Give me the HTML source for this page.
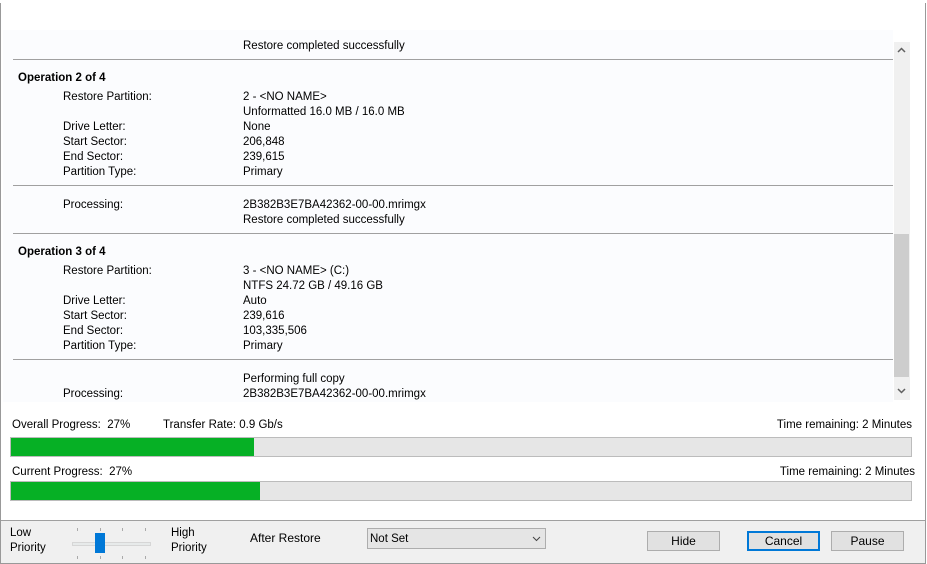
<!DOCTYPE html>
<html><head><style>
*{margin:0;padding:0;box-sizing:border-box}
body{width:927px;height:564px;position:relative;background:#fff;font-family:"Liberation Sans",sans-serif;font-size:11.5px;color:#000;overflow:hidden}
.a{position:absolute;white-space:nowrap;line-height:15px}
.b{font-weight:bold}
.hr{position:absolute;left:13px;width:880px;height:1px;background:#a0a0a0}
.bar{position:absolute;left:10px;width:902px;height:20px;background:#e6e6e6;border:1px solid #bcbcbc}
.bar div{height:100%;background:#06b025}
.btn{position:absolute;top:531px;height:20px;width:73px;background:#e1e1e1;border:1px solid #adadad;text-align:center;line-height:18px;font-size:12px}
.t{position:absolute;width:1px;height:3px;background:#aaa}
</style></head><body>
<div style="position:absolute;left:0;top:3px;width:926px;height:561px;border:1px solid #999;border-top:none;background:#fff"></div>
<div style="position:absolute;left:3px;top:30px;width:890px;height:372px;background:#fbfcfe"></div>
<div class="a" style="left:243px;top:39px">Restore completed successfully</div>
<div class="hr" style="top:59px"></div>
<div class="a b" style="left:18px;top:71px">Operation 2 of 4</div>
<div class="a" style="left:63px;top:90px">Restore Partition:<br><br>Drive Letter:<br>Start Sector:<br>End Sector:<br>Partition Type:</div>
<div class="a" style="left:243px;top:90px">2 - &lt;NO NAME&gt;<br>Unformatted 16.0 MB / 16.0 MB<br>None<br>206,848<br>239,615<br>Primary</div>
<div class="hr" style="top:185px"></div>
<div class="a" style="left:63px;top:198px">Processing:</div>
<div class="a" style="left:243px;top:198px">2B382B3E7BA42362-00-00.mrimgx<br>Restore completed successfully</div>
<div class="hr" style="top:233px"></div>
<div class="a b" style="left:18px;top:245px">Operation 3 of 4</div>
<div class="a" style="left:63px;top:264px">Restore Partition:<br><br>Drive Letter:<br>Start Sector:<br>End Sector:<br>Partition Type:</div>
<div class="a" style="left:243px;top:264px">3 - &lt;NO NAME&gt; (C:)<br>NTFS 24.72 GB / 49.16 GB<br>Auto<br>239,616<br>103,335,506<br>Primary</div>
<div class="hr" style="top:359px"></div>
<div class="a" style="left:243px;top:372px">Performing full copy</div>
<div class="a" style="left:63px;top:387px">Processing:</div>
<div class="a" style="left:243px;top:387px">2B382B3E7BA42362-00-00.mrimgx</div>
<div style="position:absolute;left:894px;top:42px;width:16px;height:358px;background:#f0f0f0"></div>
<div style="position:absolute;left:894px;top:234px;width:15px;height:143px;background:#cdcdcd"></div>
<svg style="position:absolute;left:897px;top:47px" width="9" height="6"><path d="M1 5L4.5 1.5L8 5" stroke="#606060" stroke-width="1.5" fill="none"/></svg>
<svg style="position:absolute;left:897px;top:388px" width="9" height="6"><path d="M1 1L4.5 4.5L8 1" stroke="#606060" stroke-width="1.5" fill="none"/></svg>
<div class="a" style="left:12px;top:418px">Overall Progress:&nbsp; 27%</div>
<div class="a" style="left:163px;top:418px">Transfer Rate: 0.9 Gb/s</div>
<div class="a" style="right:15px;top:418px">Time remaining: 2 Minutes</div>
<div class="bar" style="top:437px"><div style="width:243px"></div></div>
<div class="a" style="left:12px;top:465px">Current Progress:&nbsp; 27%</div>
<div class="a" style="right:12px;top:465px">Time remaining: 2 Minutes</div>
<div class="bar" style="top:481px"><div style="width:249px"></div></div>
<div style="position:absolute;left:1px;top:520px;width:924px;height:43px;background:#f0f0f0;border-top:1px solid #a0a0a0"></div>
<div class="a" style="left:10px;top:526px">Low<br>Priority</div>
<div class="a" style="left:171px;top:526px">High<br>Priority</div>
<div class="t" style="left:77px;top:528px"></div><div class="t" style="left:100px;top:528px"></div><div class="t" style="left:122px;top:528px"></div><div class="t" style="left:145px;top:528px"></div>
<div class="t" style="left:77px;top:556px"></div><div class="t" style="left:100px;top:556px"></div><div class="t" style="left:122px;top:556px"></div><div class="t" style="left:145px;top:556px"></div>
<div style="position:absolute;left:72px;top:542px;width:79px;height:4px;background:#e7eaea;border:1px solid #d6d6d6"></div>
<div style="position:absolute;left:95px;top:533px;width:10px;height:20px;background:#0078d7"></div>
<div class="a" style="left:250px;top:531px;font-size:12px">After Restore</div>
<div style="position:absolute;left:367px;top:528px;width:179px;height:21px;background:#e5e5e5;border:1px solid #adadad"></div>
<div class="a" style="left:370px;top:532px">Not Set</div>
<svg style="position:absolute;left:532px;top:536px" width="9" height="6"><path d="M1 1L4.5 4.5L8 1" stroke="#444" stroke-width="1" fill="none"/></svg>
<div class="btn" style="left:647px">Hide</div>
<div class="btn" style="left:747px;border:2px solid #0078d7;line-height:16px">Cancel</div>
<div class="btn" style="left:831px">Pause</div>
</body></html>
